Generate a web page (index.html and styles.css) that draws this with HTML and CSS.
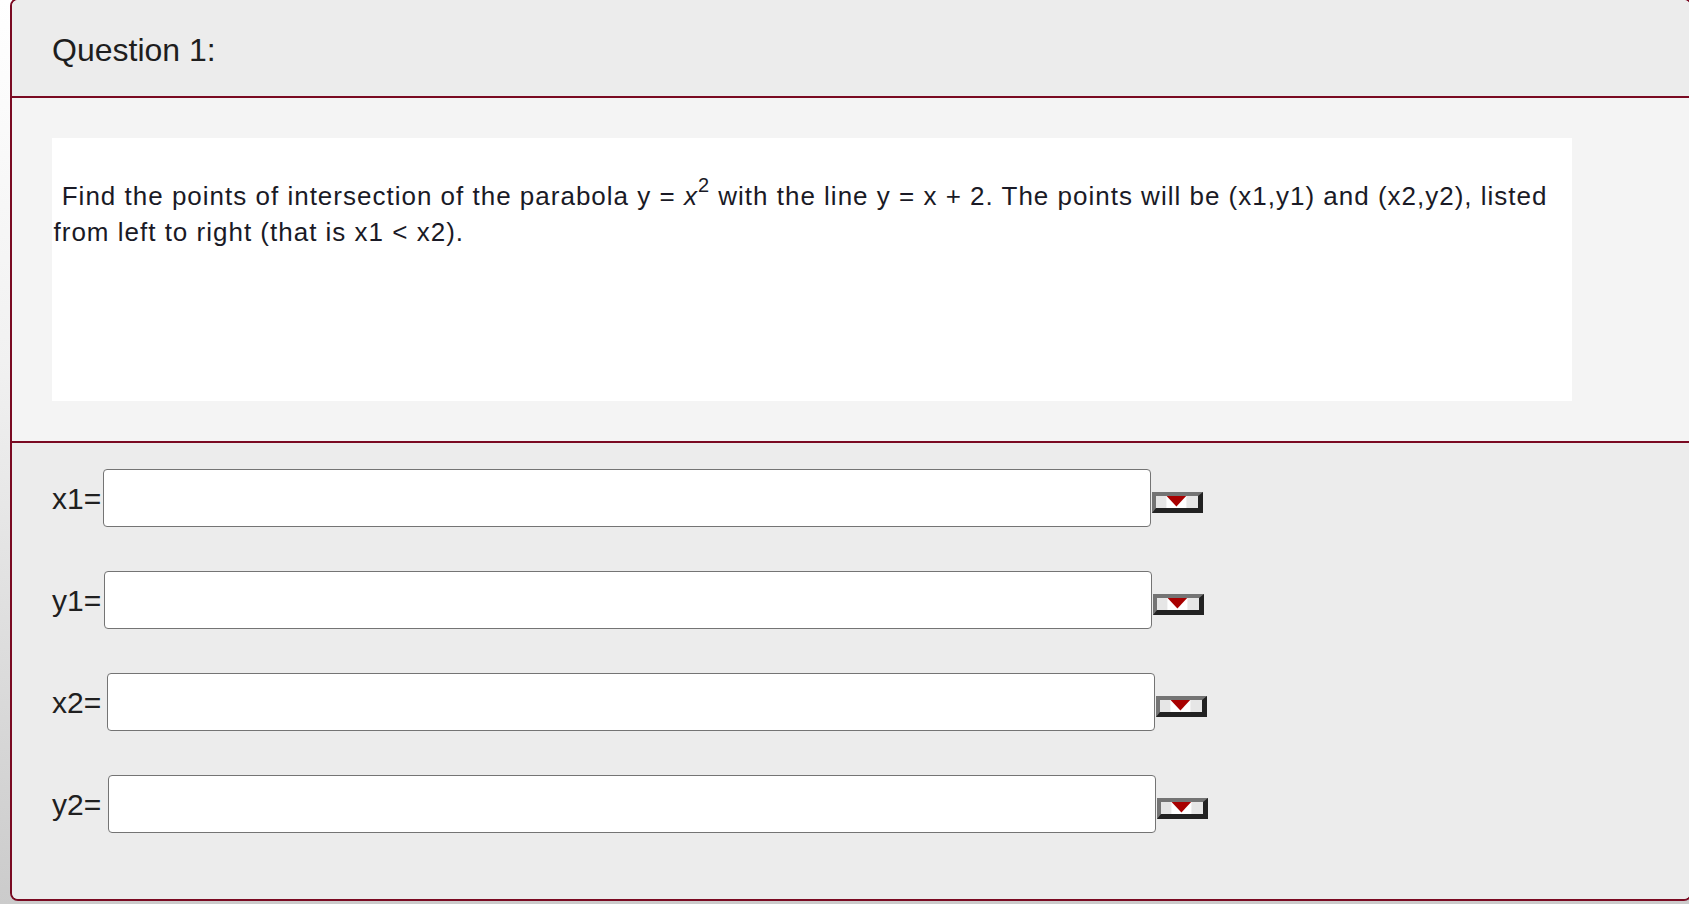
FILE: index.html
```html
<!DOCTYPE html>
<html lang="en">
<head>
<meta charset="utf-8">
<title>Question 1</title>
<link rel="stylesheet" href="styles.css">
</head>
<body>
<div class="panel">
  <div class="panel-head">Question 1:</div>
  <div class="panel-body">
    <div class="question-box">&nbsp;Find the points of intersection of the parabola y = <i>x</i><sup>2</sup> with the line y = x + 2. The points will be (x1,y1) and (x2,y2), listed from left to right (that is x1 &lt; x2).</div>
  </div>
  <div class="panel-answers">
    <div class="answer-row">
      <label class="answer-label">x1=</label>
      <input class="answer-input" type="text">
      <span class="drop-icon"><svg width="42" height="12" viewBox="0 0 42 12"><rect x="10.4" y="0" width="20" height="12" fill="#fff"/><polygon points="10.6,0 30.2,0 20.4,10.5" fill="#a80000"/></svg></span>
    </div>
    <div class="answer-row">
      <label class="answer-label lbl-y1">y1=</label>
      <input class="answer-input" type="text">
      <span class="drop-icon"><svg width="42" height="12" viewBox="0 0 42 12"><rect x="10.4" y="0" width="20" height="12" fill="#fff"/><polygon points="10.6,0 30.2,0 20.4,10.5" fill="#a80000"/></svg></span>
    </div>
    <div class="answer-row">
      <label class="answer-label lbl-x2">x2=</label>
      <input class="answer-input" type="text">
      <span class="drop-icon"><svg width="42" height="12" viewBox="0 0 42 12"><rect x="10.4" y="0" width="20" height="12" fill="#fff"/><polygon points="10.6,0 30.2,0 20.4,10.5" fill="#a80000"/></svg></span>
    </div>
    <div class="answer-row">
      <label class="answer-label lbl-y2">y2=</label>
      <input class="answer-input" type="text">
      <span class="drop-icon"><svg width="42" height="12" viewBox="0 0 42 12"><rect x="10.4" y="0" width="20" height="12" fill="#fff"/><polygon points="10.6,0 30.2,0 20.4,10.5" fill="#a80000"/></svg></span>
    </div>
  </div>
</div>
</body>
</html>
```
FILE: styles.css
```css
html, body {
  margin: 0;
  padding: 0;
  overflow: hidden;
}
body {
  width: 1689px;
  height: 904px;
  background: linear-gradient(to bottom, #ffffff 0%, #f1f1f1 40%, #cbcbcb 100%);
  font-family: "Liberation Sans", Arial, sans-serif;
  color: #222;
}
.panel {
  margin-left: 10px;
  margin-top: -2px;
  width: 1682px;
  box-sizing: border-box;
  border: 2px solid #7a0a22;
  border-radius: 8px;
  overflow: hidden;
}
.panel-head {
  box-sizing: border-box;
  height: 98px;
  padding: 32px 40px 0 40px;
  font-size: 32px;
  color: #1e1e1e;
  background: #ececec;
  border-bottom: 2px solid #7a0a22;
}
.panel-body {
  background: #f4f4f4;
  padding: 40px;
  border-bottom: 2px solid #7a0a22;
}
.question-box {
  box-sizing: border-box;
  width: 1520px;
  height: 263px;
  background: #ffffff;
  padding: 41px 0 0 1.5px;
  font-size: 26px;
  letter-spacing: 1px;
  line-height: 35.7px;
  color: #1a1a26;
}
.question-box i {
  font-style: italic;
}
.question-box sup {
  font-size: 20px;
  line-height: 0;
  vertical-align: 13px;
}
.panel-answers {
  background: #ececec;
  padding: 26px 40px 66px 40px;
  display: flex;
  flex-direction: column;
  gap: 44px;
}
.answer-row {
  display: flex;
  align-items: flex-start;
  height: 58px;
}
.answer-label {
  font-size: 30px;
  line-height: 56px;
  padding-top: 2px;
  padding-right: 1.5px;
  color: #202020;
}
.lbl-y1 { padding-right: 2.5px; }
.lbl-x2 { padding-right: 5.5px; }
.lbl-y2 { padding-right: 6.5px; }
.answer-input {
  box-sizing: border-box;
  width: 1048px;
  height: 58px;
  margin: 0;
  border: 1.5px solid #747474;
  border-radius: 4px;
  background: #ffffff;
  outline: none;
}
.drop-icon {
  display: block;
  margin-top: 23px;
  margin-left: 1px;
  width: 42px;
  height: 12px;
  border-style: solid;
  border-width: 4px 5px 5px 4px;
  border-color: #747474 #222222 #222222 #747474;
  background: #e6e6e6;
}
.drop-icon svg {
  display: block;
}
```
